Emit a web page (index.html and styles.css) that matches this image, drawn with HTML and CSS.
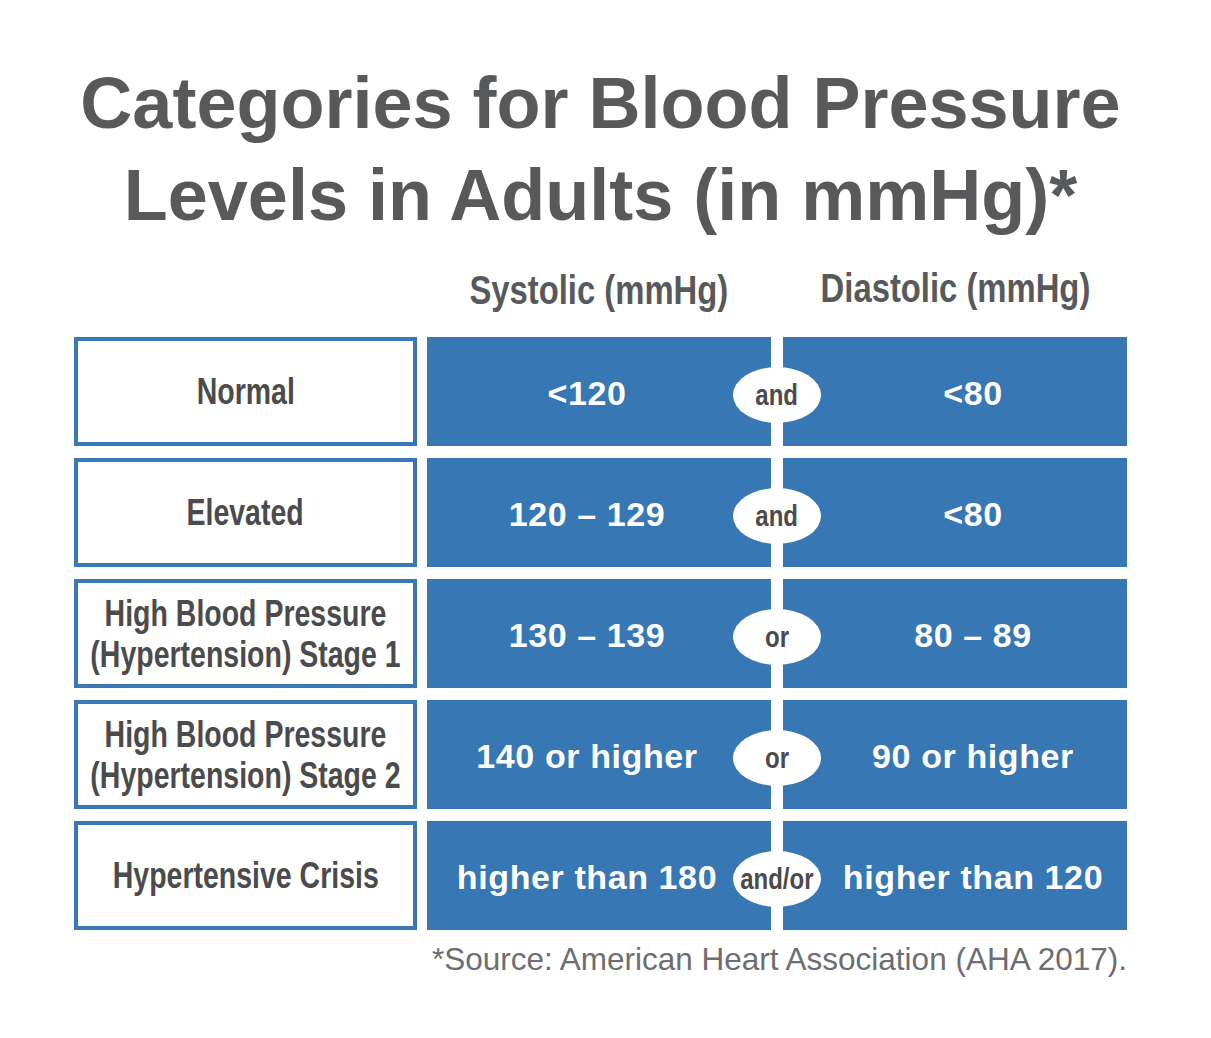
FILE: index.html
```html
<!DOCTYPE html>
<html lang="en">

<head>
    <meta charset="UTF-8">
    <meta name="viewport" content="width=device-width, initial-scale=1.0">
    <title>Categories for Blood Pressure Levels</title>
    <link rel="stylesheet" href="styles.css">
</head>

<body>
    <div class="page">
        <h1 class="title">Categories for Blood Pressure<br>Levels in Adults (in mmHg)*</h1>

        <div class="chart">
            <div class="heads">
                <div></div>
                <div class="head"><span class="narrow">Systolic (mmHg)</span></div>
                <div class="head head-dia"><span class="narrow">Diastolic (mmHg)</span></div>
            </div>

            <div class="rows">
                <div class="row">
                    <div class="label"><span class="narrow">Normal</span></div>
                    <div class="value sys">&lt;120</div>
                    <div class="value dia">&lt;80</div>
                    <span class="joint"><span class="narrow">and</span></span>
                </div>
                <div class="row">
                    <div class="label"><span class="narrow">Elevated</span></div>
                    <div class="value sys">120 – 129</div>
                    <div class="value dia">&lt;80</div>
                    <span class="joint"><span class="narrow">and</span></span>
                </div>
                <div class="row">
                    <div class="label"><span class="narrow">High Blood Pressure<br>(Hypertension) Stage 1</span></div>
                    <div class="value sys">130 – 139</div>
                    <div class="value dia">80 – 89</div>
                    <span class="joint"><span class="narrow">or</span></span>
                </div>
                <div class="row">
                    <div class="label"><span class="narrow">High Blood Pressure<br>(Hypertension) Stage 2</span></div>
                    <div class="value sys">140 or higher</div>
                    <div class="value dia">90 or higher</div>
                    <span class="joint"><span class="narrow">or</span></span>
                </div>
                <div class="row">
                    <div class="label"><span class="narrow">Hypertensive Crisis</span></div>
                    <div class="value sys">higher than 180</div>
                    <div class="value dia">higher than 120</div>
                    <span class="joint"><span class="narrow">and/or</span></span>
                </div>
            </div>

            <p class="source">*Source: American Heart Association (AHA 2017).</p>
        </div>
    </div>
</body>

</html>
```

FILE: styles.css
```css
/* Reset and base styling */
* {
    margin: 0;
    padding: 0;
    box-sizing: border-box;
}

body {
    font-family: 'Liberation Sans', Arial, sans-serif;
    background: #ffffff;
    color: #58595b;
}

.page {
    width: 1053px;
    margin-left: 74px;
    padding-top: 57px;
}

/* condensed look: no narrow face is installed, so squeeze the bold one */
.narrow {
    display: inline-block;
    white-space: nowrap;
    transform: scaleX(0.77);
}

/* Title */
.title {
    font-size: 72px;
    line-height: 92px;
    font-weight: bold;
    text-align: center;
    color: #58595b;
}

/* Column headings */
.heads,
.row {
    display: grid;
    grid-template-columns: 343px 344px 346px;
    column-gap: 10px;
}

.heads {
    margin-top: 26px;
    margin-bottom: 24px;
}

.head {
    display: flex;
    justify-content: center;
    font-size: 40px;
    line-height: 46px;
    font-weight: bold;
    color: #58595b;
}

.head .narrow {
    transform: scaleX(0.82);
}

.head-dia {
    margin-left: 2px;
    margin-top: -2px;
}

/* Rows */
.rows {
    display: flex;
    flex-direction: column;
    gap: 12px;
}

.row {
    position: relative;
    height: 109px;
}

.label {
    border: 4px solid #3a78b5;
    display: flex;
    align-items: center;
    justify-content: center;
    text-align: center;
    font-size: 37px;
    line-height: 41px;
    font-weight: bold;
    color: #4b4b4d;
}

.value {
    background-color: #3777b4;
    display: flex;
    align-items: center;
    justify-content: center;
    padding-top: 3px;
    font-size: 34px;
    font-weight: bold;
    letter-spacing: 0.6px;
    white-space: nowrap;
    color: #ffffff;
}

.value.sys {
    padding-right: 24px;
}

.value.dia {
    margin-left: 2px;
    padding-left: 36px;
}

/* "and" / "or" bubble sitting over the gap */
.joint {
    position: absolute;
    left: 659px;
    top: 30px;
    width: 88px;
    height: 56px;
    border-radius: 50%;
    background: #ffffff;
    display: flex;
    align-items: center;
    justify-content: center;
    font-size: 30px;
    font-weight: bold;
    color: #4b4b4d;
}

.joint .narrow {
    transform: scaleX(0.8);
}

/* Footnote */
.source {
    margin-top: 11px;
    text-align: right;
    font-size: 31.5px;
    line-height: 36px;
    color: #6d6e71;
}
```
